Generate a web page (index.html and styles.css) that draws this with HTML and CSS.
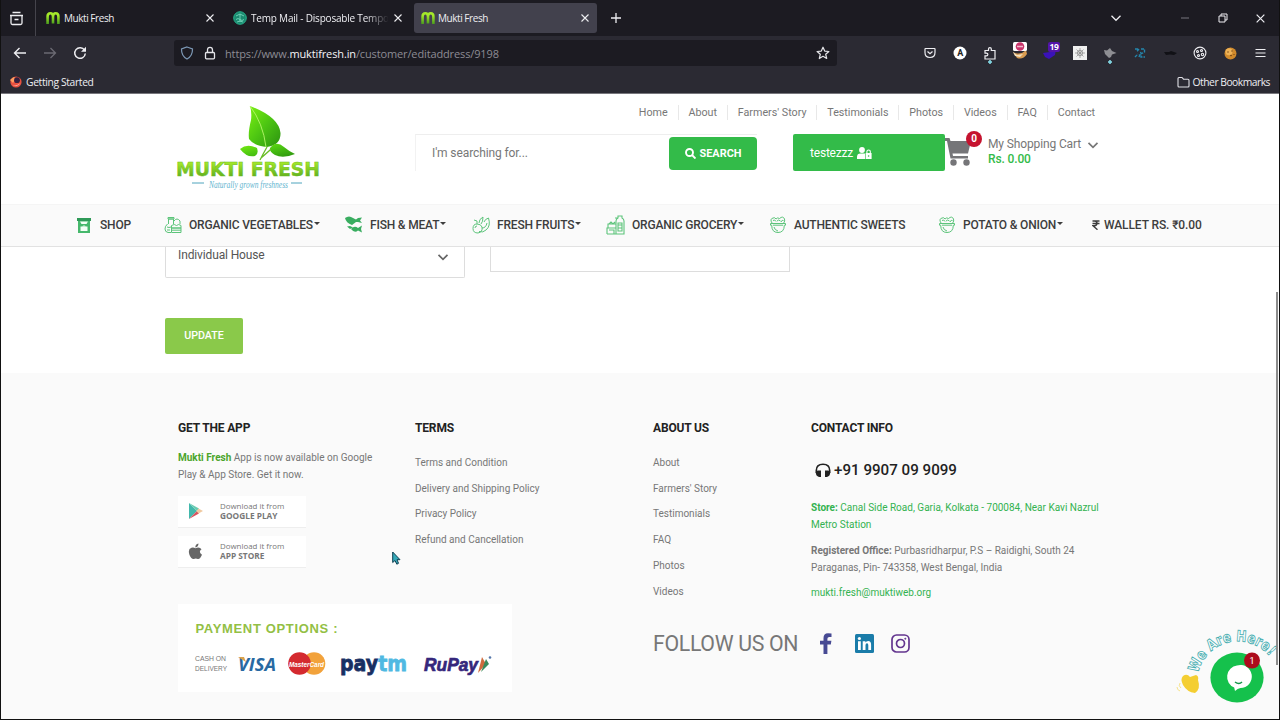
FILE: index.html
```html
<!DOCTYPE html>
<html lang="en">
<head>
<meta charset="utf-8">
<title>Mukti Fresh</title>
<link rel="stylesheet" href="styles.css">
</head>
<body>
<svg class="defs" width="0" height="0">
  <defs>
    <linearGradient id="lime" x1="0" y1="0" x2="0" y2="1"><stop offset="0.2" stop-color="#a4e82a"/><stop offset="1" stop-color="#4a9e1c"/></linearGradient>
    <linearGradient id="leaf" x1="0" y1="0" x2="1" y2="1"><stop offset="0" stop-color="#7bf012"/><stop offset=".5" stop-color="#4cc512"/><stop offset="1" stop-color="#2c9210"/></linearGradient>
    <symbol id="m" viewBox="0 0 14 14"><path d="M1.600 13V5.500Q1.600 2.200 4.400 2.200Q7 2.200 7 5.500V12.500M7 5.500Q7 2.200 9.700 2.200Q12.400 2.200 12.400 5.500V13" fill="none" stroke="url(#lime)" stroke-width="2.600"/></symbol>
    <symbol id="x" viewBox="0 0 10 10"><path d="M1.500 1.500l7 7M8.500 1.500l-7 7" stroke="currentColor" stroke-width="1.100"/></symbol>
    <symbol id="down" viewBox="0 0 12 12"><path d="M1.500 3.800L6 8.300l4.500-4.500" fill="none" stroke="currentColor" stroke-width="1.700"/></symbol>
    <symbol id="bowl" viewBox="0 0 18 18"><g fill="none" stroke="currentColor" stroke-width="1"><path d="M1.500 7.500h15v1.700h-1.200Q15.300 16.500 9 16.500T2.700 9.200H1.500zM4 9.200h10"/><path d="M3 7Q.5 3 4 2q2-1 3 1 1.500-2 3.500-.5Q14-.5 15.500 3q.8 2-.8 4M4 4.500q2-1.500 3 1M8 5q1.500-2 3.500 0M12 6q1-2.500 2.500-1.500"/><path d="M5 11q.5 3 4 4"/></g></symbol>
  </defs>
</svg>

<header class="chrome">
  <div class="tabs">
    <div class="tabs-view"><svg width="15" height="15" viewBox="0 0 15 15" fill="none" stroke="currentColor" stroke-width="1.300"><path d="M3.500 1.500h8M1 4.500h13M2 4.500v7.500q0 1.500 1.500 1.500h8q1.500 0 1.500-1.500V4.500M5.500 8.500h4"/></svg></div>
    <div class="tab"><svg class="fav"><use href="#m"/></svg><span class="tab-title">Mukti Fresh</span><svg class="close"><use href="#x"/></svg></div>
    <div class="tab"><svg class="fav" viewBox="0 0 14 14"><circle cx="7" cy="7" r="6.300" fill="#1b8a70" stroke="#27b18c"/><path d="M3 5l4-2 4 2M3 8.500q2-2 4 0t4 0M4 11l3-1 3 1M7 3v8" stroke="#7fe0c4" stroke-width=".8" fill="none"/></svg><span class="tab-title fade">Temp Mail - Disposable Tempo</span><svg class="close"><use href="#x"/></svg></div>
    <div class="tab active"><svg class="fav"><use href="#m"/></svg><span class="tab-title">Mukti Fresh</span><svg class="close"><use href="#x"/></svg></div>
    <svg class="plus" width="12" height="12" viewBox="0 0 12 12"><path d="M6 1v10M1 6h10" stroke="currentColor" stroke-width="1.300"/></svg>
    <div class="win">
      <svg width="12" height="12" viewBox="0 0 12 12"><path d="M1.500 3.800L6 8.300l4.500-4.500" fill="none" stroke="currentColor" stroke-width="1.300"/></svg>
      <svg width="10" height="10" viewBox="0 0 10 10"><path d="M1 5h8" stroke="#77767e" stroke-width="1"/></svg>
      <svg width="10" height="10" viewBox="0 0 10 10" fill="none" stroke="currentColor"><path d="M1 3h6v6H1zM3 3V1h6v6H7"/></svg>
      <svg width="11" height="11"><use href="#x"/></svg>
    </div>
  </div>
  <div class="toolbar">
    <div class="nav-ic"><svg width="14" height="14" viewBox="0 0 14 14"><path d="M13 7H2M6.500 2L1.500 7l5 5" fill="none" stroke="currentColor" stroke-width="1.400"/></svg></div>
    <div class="nav-ic dim"><svg width="14" height="14" viewBox="0 0 14 14"><path d="M1 7h11M7.500 2l5 5-5 5" fill="none" stroke="currentColor" stroke-width="1.300"/></svg></div>
    <div class="nav-ic"><svg width="14" height="14" viewBox="0 0 14 14"><path d="M11.500 4.200A5.300 5.300 0 1 0 12.300 7.500" fill="none" stroke="currentColor" stroke-width="1.500"/><path d="M13 .8v5H8z" fill="currentColor"/></svg></div>
    <div class="url">
      <svg width="14" height="14" viewBox="0 0 14 14"><path d="M7 1l5.500 2q.2 7-5.500 10Q1.300 10 1.500 3z" fill="none" stroke="#7c98b5" stroke-width="1.200"/></svg>
      <svg width="12" height="14" viewBox="0 0 12 14" fill="none" stroke="#e6e6ea" stroke-width="1.300"><rect x="1.500" y="6.500" width="9" height="6.300" rx="1"/><path d="M3.500 6.500V4Q3.500 1.300 6 1.300T8.500 4v2.500"/></svg>
      <span class="addr">https://www.<b>muktifresh.in</b>/customer/editaddress/9198</span>
      <svg class="star" width="14" height="14" viewBox="0 0 14 14"><path d="M7 1.200l1.700 3.900 4.200.4-3.200 2.800 1 4.200L7 10.300l-3.700 2.200 1-4.200L1.100 5.500l4.200-.4z" fill="none" stroke="#e6e6ea" stroke-width="1.200" stroke-linejoin="round"/></svg>
    </div>
    <div class="exts">
      <div><svg width="12" height="12" viewBox="0 0 12 12" fill="none" stroke="currentColor" stroke-width="1.200"><path d="M1.500 1.500h9q.5 0 .5.500v3.500Q11 10.500 6 10.500T1 5.500V2q0-.5.500-.5zM3.500 4.500L6 6.800 8.500 4.500"/></svg></div>
      <div><svg width="14" height="14" viewBox="0 0 14 14"><circle cx="7" cy="7" r="6.500" fill="#fff"/><text x="7" y="10.300" text-anchor="middle" class="ext-a">A</text></svg></div>
      <div class="dot"><svg width="14" height="14" viewBox="0 0 14 14" fill="none" stroke="currentColor" stroke-width="1.200"><path d="M2 13V9.800h1.500a1.300 1.300 0 0 0 0-2.700H2V4.500h3.500V3a1.400 1.400 0 0 1 2.800 0v1.500H12V13z"/></svg></div>
      <div class="up"><svg width="16" height="19" viewBox="0 0 16 19"><path d="M1 11q7 4 13-2l1 4q-4 6-10 4z" fill="#d99c52"/><rect x="1" y="1" width="14" height="9" rx="1.500" fill="#fff"/><circle cx="8" cy="5.500" r="4.300" fill="#c9346b"/><path d="M5 5.500h6" stroke="#f3b8cc" stroke-width="1.500"/><path d="M1 11l4 3 6-1-3 3-5-1z" fill="#f4e1c0"/></svg></div>
      <div class="up"><svg width="22" height="20" viewBox="0 0 22 20"><path d="M4 12l7-1 6-3-1 6-6 4-4-2z" fill="#3a12b8"/><rect x="9" y="1" width="12" height="10" rx="2" fill="#5314a9"/><text x="15" y="9" text-anchor="middle" class="ext-n">19</text></svg></div>
      <div><svg width="14" height="14" viewBox="0 0 14 14"><path d="M0 0h14v14H0z" fill="#f0f0f0"/><g stroke="#888" stroke-width=".7" fill="none"><path d="M7 2v10M2 7h10M3.500 3.500l7 7M10.500 3.500l-7 7"/><circle cx="7" cy="7" r="2.700"/></g></svg></div>
      <div class="dot"><svg width="14" height="12" viewBox="0 0 14 12"><path d="M1 3l3 .5L7 1l2 3 4.500 2L9 7.500 8 10l-2 1-4-4z" fill="#8e8e93"/></svg></div>
      <div><svg width="12" height="12" viewBox="0 0 12 12" fill="none" stroke="#2486ad" stroke-width="1.400"><path d="M1 2h4L2.500 5M7 2h3.500v3L7 7v3h4M1 10l3-3M5 10l2-5" stroke-dasharray="3 1"/></svg></div>
      <div><svg width="13" height="6" viewBox="0 0 13 6"><path d="M0 2h5l2-1 6 2-3 2-4-.5-4 .5z" fill="#111116"/></svg></div>
      <div><svg width="14" height="14" viewBox="0 0 14 14" fill="none" stroke="currentColor" stroke-width="1.100"><circle cx="7" cy="7" r="5.900"/><circle cx="4.500" cy="5.500" r="1"/><circle cx="8.500" cy="4.500" r="1"/><circle cx="9.500" cy="8.500" r="1.200"/><circle cx="5.500" cy="9.500" r="1"/></svg></div>
      <div><svg width="13" height="13" viewBox="0 0 13 13"><circle cx="6.500" cy="6.500" r="6" fill="#d08a2c"/><circle cx="5" cy="4.800" r="3.500" fill="#eeb256"/><g fill="#6a3b10"><circle cx="4" cy="5" r=".7"/><circle cx="8" cy="4" r=".7"/><circle cx="7" cy="8.500" r=".8"/><circle cx="10" cy="7.500" r=".6"/></g></svg></div>
      <div><svg width="11" height="10" viewBox="0 0 11 10"><path d="M.5 1.500h10M.5 5h10M.5 8.500h10" stroke="currentColor" stroke-width="1.100"/></svg></div>
    </div>
  </div>
  <div class="bookmarks">
    <svg width="12" height="12" viewBox="0 0 12 12"><circle cx="6" cy="6" r="5.600" fill="#e8503f"/><path d="M0 4Q3 1 4.500 1L5 4 3 7z" fill="#ff9d5f"/><circle cx="7" cy="4.200" r="2.900" fill="#33203f"/><path d="M1 7.500q4 4 9.500-.5-4 6-9.500.5z" fill="#ffb3a2"/></svg>
    <span>Getting Started</span>
    <svg class="folder" width="13" height="12" viewBox="0 0 13 12"><path d="M1 10V2.500q0-1 1-1h3l1.500 1.700H11q1 0 1 1V10q0 1-1 1H2q-1 0-1-1z" fill="none" stroke="#e0e0e6" stroke-width="1.100"/></svg>
    <span class="other">Other Bookmarks</span>
  </div>
</header>

<section class="top">
  <svg class="logo" width="148" height="90" viewBox="0 0 148 90">
    <path d="M74 1Q103 12 104.500 28 105 40 91 42 78 41 73 34 72 27 75 15 76 7 74 1z" fill="url(#leaf)"/>
    <path d="M74 1Q87 18 90 42" stroke="#b7f56d" stroke-width=".9" fill="none"/>
    <path d="M64 44q7-6 17-1 2 6-2 8-8 2-15-7zM94 43q6-8 14-1 6 5 11 7-12 5-20 1-6-3-5-7z" fill="url(#leaf)"/>
    <path d="M91 42q-4 7-7 13M95 44q-3 3-10 9" stroke="#69bd25" stroke-width="1.300" fill="none"/>
    <text x="0" y="71" textLength="144" lengthAdjust="spacingAndGlyphs" class="logo-name">MUKTI FRESH</text>
    <path d="M16 78h12M115 78h11" stroke="#4fa4bd" stroke-width="1"/>
    <text x="33" y="82.500" textLength="79" lengthAdjust="spacingAndGlyphs" class="logo-sub">Naturally grown freshness</text>
  </svg>
  <div class="top-right">
    <nav class="links"><a>Home</a><a>About</a><a>Farmers' Story</a><a>Testimonials</a><a>Photos</a><a>Videos</a><a>FAQ</a><a>Contact</a></nav>
    <div class="row">
      <div class="search"><span>I'm searching for...</span>
        <button class="search-btn"><svg width="11" height="11" viewBox="0 0 11 11" fill="none" stroke="#fff" stroke-width="1.900"><circle cx="4.500" cy="4.500" r="3.500"/><path d="M7 7l3.500 3.500"/></svg>SEARCH</button></div>
      <button class="account">testezzz<svg width="15" height="12" viewBox="0 0 15 12" fill="#fff"><circle cx="5" cy="3" r="2.900"/><path d="M0 12V10q0-3.400 3.500-3.400H8V12z"/><path d="M8.600 6h6v6h-6z"/><path d="M9.900 6.500V4.600q0-1.600 1.700-1.600t1.700 1.600v1.900" fill="none" stroke="#fff" stroke-width="1.100"/><circle cx="11.600" cy="9" r=".8" fill="#33bb49"/></svg></button>
      <div class="cart">
        <svg width="27" height="28" viewBox="0 0 27 28" fill="#757578"><path d="M0 0h4.500l1 3H26l-3 12.500H7.500l.5 2.500h15v2.500H5.500L2 3H0z"/><circle cx="8.500" cy="24.500" r="3.200"/><circle cx="21.500" cy="24.500" r="3.200"/></svg>
        <span class="badge">0</span>
      </div>
      <div class="cart-text"><div>My Shopping Cart <svg width="12" height="12"><use href="#down"/></svg></div><b>Rs. 0.00</b></div>
    </div>
  </div>
</section>

<nav class="menu">
  <a><svg width="16" height="18" viewBox="0 0 16 18"><path d="M1 2h14v3H1z" fill="#2f9a58"/><path d="M2 5h12v12H2z" fill="#46b86c"/><path d="M4 5.500h8L10.500 8h-5zM4.500 10.500h7V15h-7z" fill="#f4fff6"/><path d="M6 10.500q2-2 4 0z" fill="#f4fff6"/></svg><span>SHOP</span></a>
  <a><svg width="18" height="18" viewBox="0 0 18 18" fill="none" stroke="currentColor" stroke-width="1"><path d="M4.500 8V3h5v5M4 1.500h6V3H4zM10 5q3-4 6 0v3M7.500 12v-2.500q3-2 5 0 2-2 4.500 0V12zM7.500 12h9.500v4.500H7.500zM7.500 14.200H17M3.500 8Q1 10 1 13t3 3.500h3M3 11q2 1 4 0M3 14h3"/></svg><span class="caret">ORGANIC VEGETABLES</span></a>
  <a><svg width="18" height="18" viewBox="0 0 18 18" fill="#39ad60"><path d="M0 2q4-3 8 0l3 1.500L13 2l4-.5-2 3 2 2.500-4-1-2 0-4 3Q1 7 0 2zM6 13q3.500-4 7-1l4-2.500-1 3.500 1 3.500-4-2q-3.500 3-7-1.500z"/><path d="M2 10.500l3-.5 3 1.500-3 1.500z"/></svg><span class="caret">FISH &amp; MEAT</span></a>
  <a><svg width="18" height="18" viewBox="0 0 18 18" fill="none" stroke="currentColor" stroke-width="1"><path d="M7 7q0-4 4-6 0 5-2 7M12 6q1-3 4.500-4Q19 10 14 14q-3 3-7 1.500M5 8q-4 0-4 4.500T6 17q5-1 4-6-1-3-5-3zM5 8V5L2 4M10 12q4 0 5-5M3 12q0-2 2-2"/></svg><span class="caret">FRESH FRUITS</span></a>
  <a><svg width="19" height="20" viewBox="0 0 19 20" fill="none" stroke="currentColor" stroke-width="1.100"><path d="M1 19h17V6q0-2-2-3V1h-4v2q-2 1-2 3v13M1 19v-6h9M2 13V9h8M3 9l2-2 2 2 2-2M3 15h5v4M12 8h4v8h-4zM12 10h4M12 13h4M9 3h3"/></svg><span class="caret">ORGANIC GROCERY</span></a>
  <a><svg width="18" height="18"><use href="#bowl"/></svg><span>AUTHENTIC SWEETS</span></a>
  <a><svg width="18" height="18"><use href="#bowl"/></svg><span class="caret">POTATO &amp; ONION</span></a>
  <a class="wallet"><svg width="8" height="10" viewBox="0 0 8 10" fill="none" stroke="#3d3d3d" stroke-width="1.400"><path d="M.5 1h7M.5 3.500h7M1 1h1.500Q5 1 5 3.300T2.500 5.800H1L5.500 9.700"/></svg><span>WALLET RS. ₹0.00</span></a>
</nav>

<main class="form">
  <div class="fields">
    <div class="select"><span>Individual House</span><svg width="12" height="12"><use href="#down"/></svg></div>
    <div class="input"></div>
  </div>
  <button class="update">UPDATE</button>
</main>

<footer class="footer">
  <div class="left">
    <div class="app">
      <h4>GET THE APP</h4>
      <p><b>Mukti Fresh</b> App is now available on Google<br>Play &amp; App Store. Get it now.</p>
      <div class="store"><svg width="15" height="16" viewBox="0 0 15 16"><path d="M1 0v16l8-8z" fill="#42b8ac"/><path d="M1 0l10 5.500L9 8z" fill="#6acbb0"/><path d="M1 16l10-5.500L9 8z" fill="#d8545e"/><path d="M10.500 5.500L15 8l-4.500 2.500L8.500 8z" fill="#f0c9a0"/></svg><div>Download it from<b>GOOGLE PLAY</b></div></div>
      <div class="store"><svg width="15" height="17" viewBox="0 0 15 17" fill="#666"><path d="M10.500.5Q10.500 4 7.300 4.400 7.300 1.300 10.500.5zM7.500 5.200Q11.500 3.500 13.500 6.200q-3.500 2.500.5 5.600Q12 16.500 9.800 16q-2-1-4 0Q3.500 16.500 1.500 12q-2-6 2-7.200 2-.5 4 .4z"/></svg><div>Download it from<b>APP STORE</b></div></div>
    </div>
    <div class="terms">
      <h4>TERMS</h4>
      <ul><li>Terms and Condition</li><li>Delivery and Shipping Policy</li><li>Privacy Policy</li><li>Refund and Cancellation</li></ul>
    </div>
    <svg class="pay" width="334" height="88" viewBox="0 0 334 88">
      <path d="M0 0h334v88H0z" fill="#fff"/>
      <text x="17.500" y="28.700" textLength="142" class="pay-title">PAYMENT OPTIONS :</text>
      <text x="17" y="57" textLength="31" lengthAdjust="spacingAndGlyphs" class="cod">CASH ON</text>
      <text x="17" y="66.500" textLength="32" lengthAdjust="spacingAndGlyphs" class="cod">DELIVERY</text>
      <text x="60" y="66.500" textLength="38" lengthAdjust="spacingAndGlyphs" class="visa">VISA</text>
      <path d="M60 53h6l2 5z" fill="#dba24b"/>
      <circle cx="136" cy="59.500" r="11.300" fill="#f2a23b"/><circle cx="121.500" cy="59.500" r="11.300" fill="#d42a2f"/>
      <text x="111" y="62.500" textLength="35" lengthAdjust="spacingAndGlyphs" class="mc">MasterCard</text>
      <text x="162" y="66.500" textLength="67" lengthAdjust="spacingAndGlyphs" class="paytm">pay<tspan class="lt">tm</tspan></text>
      <text x="246" y="66.500" textLength="54" lengthAdjust="spacingAndGlyphs" class="rupay">RuPay</text>
      <path d="M304 53l4 7-8 9z" fill="#cf6b3d"/><path d="M308 55l3 5-8 8z" fill="#3a8a5b"/><circle cx="312" cy="53.500" r="1.300" fill="#5577aa"/>
    </svg>
  </div>
  <div class="right">
    <div class="about">
      <h4>ABOUT US</h4>
      <ul><li>About</li><li>Farmers' Story</li><li>Testimonials</li><li>FAQ</li><li>Photos</li><li>Videos</li></ul>
    </div>
    <div class="contact">
      <h4>CONTACT INFO</h4>
      <div class="phone"><svg width="16" height="14" viewBox="0 0 16 14"><path d="M1.300 10V7.500Q1.300 1.200 8 1.200t6.700 6.300V10" fill="none" stroke="#222" stroke-width="1.600"/><path d="M2.500 7.500H6V14H4Q.8 13 .8 9.500zM13.500 7.500H10V14h2q3.200-1 3.200-4.500z" fill="#222"/></svg>+91 9907 09 9099</div>
      <p class="green store-addr"><b>Store:</b> Canal Side Road, Garia, Kolkata - 700084, Near Kavi Nazrul<br>Metro Station</p>
      <p class="office"><b>Registered Office:</b> Purbasridharpur, P.S – Raidighi, South 24<br>Paraganas, Pin- 743358, West Bengal, India</p>
      <p class="green">mukti.fresh@muktiweb.org</p>
    </div>
    <div class="follow"><span>FOLLOW US ON</span>
      <svg width="12" height="21" viewBox="0 0 12 21"><path d="M3.500 21v-9.500H0V7.700h3.500V5Q3.500.3 8 .3q2 0 3.500.3v3.300H9.300q-1.900 0-1.900 1.800v2h4l-.6 3.800H7.400V21z" fill="#474a93"/></svg>
      <svg width="19" height="19" viewBox="0 0 19 19"><rect width="19" height="19" rx="1.500" fill="#1a7ca9"/><path d="M3 7.300h2.800v8.700H3zM7.700 7.300h2.700v1.200Q11.300 7 13.200 7q2.900 0 2.900 3.700V16h-2.800v-4.700q0-2-1.300-2-1.500 0-1.500 2V16H7.700z" fill="#fff"/><circle cx="4.400" cy="4.500" r="1.600" fill="#fff"/></svg>
      <svg width="19" height="19" viewBox="0 0 19 19" fill="none" stroke="#63358f" stroke-width="1.700"><rect x="1" y="1" width="17" height="17" rx="4.500"/><circle cx="9.500" cy="9.500" r="4"/><circle cx="14.300" cy="4.700" r=".6" fill="#63358f" stroke-width=".8"/></svg>
    </div>
  </div>
</footer>

<svg class="chat" width="110" height="100" viewBox="0 0 110 100">
  <path id="arc" d="M28 53A41 41 0 0 1 101 38" fill="none"/>
  <text class="chat-text"><textPath href="#arc" textLength="91" lengthAdjust="spacingAndGlyphs">We Are Here!</textPath></text>
  <path d="M13 56q4-3 7 1l6-2q3 1 2 5 3 9-3 13-8-1-12-8-3-6 0-9z" fill="#f4ce32"/>
  <path d="M10 63q-2 3 1 5M7 67q0 3 3 4" stroke="#f7e48b" fill="none"/>
  <ellipse cx="67" cy="57.500" rx="26.600" ry="25" fill="#15c14c"/>
  <path d="M67 45.500a11.500 11.500 0 1 1 3.500 22.500q-3 .5-5.500 3l-.8-3.500A11.500 11.500 0 0 1 67 45.500z" fill="#fff"/>
  <path d="M65 62q4 3 7 0" stroke="#15964a" stroke-width="1.500" fill="none"/>
  <circle cx="82" cy="40.500" r="8" fill="#ac0b1c"/><text x="82" y="44" text-anchor="middle" class="chat-n">1</text>
</svg>
<svg class="cursor" width="9" height="14" viewBox="0 0 9 14"><path d="M.7 1v10.500l2.300-2 1.800 3.700 1.700-.9L5 8.700h3z" fill="#35a9b8" stroke="#0e3f52" stroke-width="1"/></svg>
<div class="scroll"></div>
<div class="frame"></div>
</body>
</html>
```
FILE: styles.css
```css
* { box-sizing: border-box; }
body { margin: 0; width: 1280px; height: 720px; overflow: hidden; position: relative; background: #fff; font-family: Roboto, sans-serif; color: #777; }
.defs { position: absolute; }
svg { display: block; flex: none; }
button { border: 0; padding: 0; font-family: inherit; }
h4, p, ul { margin: 0; padding: 0; list-style: none; }

.chrome { height: 94px; background: #2b2a33; border-bottom: 1px solid #77767c; color: #eeeef2; font-family: "Open Sans", "Noto Sans", sans-serif; font-size: 10.3px; letter-spacing: -.35px; }
.tabs { height: 36px; background: #1c1b22; display: flex; align-items: center; }
.tabs-view { width: 36px; height: 36px; border-right: 1px solid #45444c; display: flex; align-items: center; padding-left: 9px; }
.tab { width: 188px; height: 30px; display: flex; align-items: center; padding: 0 9px 0 10px; font-size: 10px; letter-spacing: -.5px; }
.tab:nth-child(2), .tab.active { letter-spacing: -.45px; }
.tab + .tab { padding-left: 9px; }
.tab.active { width: 183px; background: #42414d; border-radius: 3px; margin-left: 2px; padding: 0 7px; }
.tab-title { margin-left: 4px; width: 141px; white-space: nowrap; overflow: hidden; }
.tab.active .tab-title { margin-left: 3px; }
.tab .fade { -webkit-mask-image: linear-gradient(to right, #000 82%, transparent 99%); mask-image: linear-gradient(to right, #000 82%, transparent 99%); width: 139px; letter-spacing: -.2px; }
.fav { width: 14px; height: 14px; }
.close { width: 10px; height: 10px; margin-left: auto; }
.plus { margin-left: 13px; }
.win { margin-left: auto; display: flex; align-items: center; padding-right: 14px; }
.win svg:nth-child(2) { margin-left: 58px; }
.win svg:nth-child(3) { margin-left: 28px; }
.win svg:nth-child(4) { margin-left: 27px; }
.toolbar { height: 34px; display: flex; align-items: center; padding-left: 5px; }
.nav-ic { width: 30px; display: flex; justify-content: center; }
.dim { color: #6b6a73; }
.url { margin-left: 79px; width: 663px; height: 26px; background: #1c1b22; border-radius: 3px; display: flex; align-items: center; padding: 0 7px 0 6px; }
.url svg:nth-child(2) { margin-left: 10px; }
.addr { margin-left: 9px; color: #8d8c94; font-size: 11px; letter-spacing: -.13px; }
.addr b { font-weight: 400; color: #f5f5f8; }
.star { margin-left: auto; }
.exts { margin-left: 78px; display: flex; }
.exts div { width: 30px; height: 26px; display: flex; align-items: center; justify-content: center; }
.exts .up { align-items: flex-start; padding-top: 1px; }
.dot { background: radial-gradient(circle at 15px 22px, #7fd0dc 1.5px, transparent 2px); }
.ext-a { font: bold 9px Roboto, sans-serif; fill: #222; }
.ext-n { font: bold 8.5px "Open Sans", sans-serif; fill: #fff; }
.bookmarks { height: 23px; display: flex; align-items: center; padding: 0 10px; }
.bookmarks span { margin-left: 4px; }
.folder { margin-left: auto; }
.bookmarks .other { margin-left: 3px; letter-spacing: -.5px; }

.top { height: 110px; display: flex; padding-left: 176px; }
.logo { margin-top: 11px; }
.logo-name { font: bold 19.5px "DejaVu Sans", sans-serif; fill: url(#lime); stroke: #6fbd24; stroke-width: .5; }
.logo-sub { font: italic 9.5px "Liberation Serif", serif; fill: #64b5cf; }
.top-right { margin-left: 91px; flex: 1; padding-top: 9px; }
.links { display: flex; margin-left: 214px; font-size: 10.72px; line-height: 15px; margin-top: 2px; }
.links a { padding: 0 10px 0 9.8px; border-right: 1px solid #e8e8e8; }
.links a:last-child { border: 0; }
.row { display: flex; margin-top: 14px; height: 37px; }
.search { width: 342px; border-top: 1px solid #eee; border-left: 1px solid #f2f2f2; display: flex; align-items: center; padding-left: 16px; font-size: 12px; letter-spacing: -.1px; }
.search-btn { margin-left: auto; width: 88px; height: 33px; background: #33bb49; border-radius: 4px; color: #fff; font-weight: 700; font-size: 10.9px; display: flex; align-items: center; justify-content: center; gap: 4px; }
.account { margin-left: 36px; width: 152px; background: #33bb49; border-radius: 2px; color: #fff; font-size: 12px; letter-spacing: -.2px; display: flex; align-items: center; padding-left: 17px; gap: 4px; }
.cart { position: relative; padding-top: 4px; }
.badge { position: absolute; left: 21px; top: -3px; width: 16px; height: 16px; border-radius: 8px; background: #c5132f; color: #fff; font-size: 10px; font-weight: 700; text-align: center; line-height: 16px; }
.cart-text { margin-left: 16px; padding-top: 3px; font-size: 12px; line-height: 15px; letter-spacing: -.13px; }
.cart-text div { display: flex; align-items: center; gap: 6px; }
.cart-text b { display: block; color: #33bb49; font-weight: 500; }

.menu { height: 43px; background: #fafafa; border-top: 1px solid #f5f5f5; border-bottom: 1px solid #e2e2e2; display: grid; grid-template-columns: 88px 181px 127px 134px 163px 169px 154px 120px; padding: 0 0 2px 76px; font-size: 12px; font-weight: 500; letter-spacing: -.18px; color: #3d3d3d; }
.menu a { display: flex; align-items: center; white-space: nowrap; }
.menu svg { color: #5cc47a; margin-right: 7px; }
.menu a:first-child svg { margin-right: 8px; }
.menu .wallet { letter-spacing: -.1px; }
.menu .wallet svg { margin-right: 4px; }
.caret::after { content: ""; display: inline-block; border: 3px solid transparent; border-top-color: #3d3d3d; border-bottom: 0; margin-left: 1px; vertical-align: 4px; }

.form { height: 126px; padding-left: 165px; background: #fff; }
.fields { display: flex; gap: 25px; }
.select { width: 300px; height: 31px; border: 1px solid #ddd; border-top: 0; border-radius: 0 0 2px 2px; display: flex; justify-content: space-between; align-items: flex-start; padding: 1px 15px 0 12px; font-size: 12px; letter-spacing: -.13px; color: #555; }
.select svg { margin-top: 3px; color: #666; }
.input { width: 300px; height: 25px; border: 1px solid #ddd; border-top: 0; }
.update { display: block; margin-top: 40px; width: 78px; height: 36px; padding-bottom: 1px; background: #8ac94a; border-radius: 2px; color: #fff; font-weight: 500; font-size: 10.7px; }

.footer { height: 347px; background: #fafafa; padding: 47px 0 0 178px; display: flex; font-size: 10px; }
h4 { font-size: 12px; font-weight: 700; line-height: 16px; color: #222; letter-spacing: -.16px; }
.left { width: 475px; display: grid; grid-template-columns: 237px 238px; grid-template-rows: 184px 88px; }
.pay { grid-column: 1 / 3; }
.app p { margin-top: 13px; line-height: 17.3px; }
.app p b { color: #4ba52c; }
.store { width: 128px; height: 32px; background: #fff; border-bottom: 1px solid #eee; display: flex; align-items: center; padding-left: 10px; margin-top: 8px; gap: 17px; font: 7.9px/10px "Open Sans", sans-serif; color: #777; }
.app p + .store { margin-top: 12px; }
.store b { display: block; font-weight: 700; font-size: 8.3px; }
ul { padding-top: 13.7px; }
li { height: 25.9px; line-height: 26px; }
.right { display: grid; grid-template-columns: 158px 310px; grid-template-rows: 207px 40px; }
.phone { display: flex; align-items: center; gap: 3px; color: #222; font-size: 15.15px; font-weight: 500; margin: 22px 0 0 4px; line-height: 24px; }
.contact p { line-height: 17.2px; margin-top: 8.3px; }
.contact .store-addr { margin-top: 17px; }
.contact .green { color: #33b250; }
.follow { grid-column: 1 / 3; display: flex; align-items: center; height: 32px; font-size: 21.3px; letter-spacing: -.33px; }
.follow svg:nth-child(2) { margin-left: 22px; }
.follow svg:nth-child(3) { margin-left: 23px; }
.follow svg:nth-child(4) { margin-left: 17px; }
.pay-title { font: bold 13px "Liberation Sans", sans-serif; fill: #93bf45; }
.cod { font: 7.5px "Liberation Sans", sans-serif; fill: #777; }
.visa { font: italic bold 18px "Open Sans", sans-serif; fill: #2869a2; }
.mc { font: italic bold 7px "Liberation Sans", sans-serif; fill: #fff; }
.paytm { font: bold 22px "DejaVu Sans", sans-serif; fill: #182f63; stroke: #182f63; stroke-width: .8; }
.lt { fill: #4fb9e2; stroke: #4fb9e2; }
.rupay { font: italic bold 18.5px "Liberation Sans", sans-serif; fill: #35277b; stroke: #35277b; stroke-width: .7; }

.chat { position: absolute; left: 1170px; top: 620px; }
.chat-text { font: bold 15px "DejaVu Sans", sans-serif; fill: #fff; stroke: #48aeb1; stroke-width: .9; }
.chat-n { font: 9px Roboto, sans-serif; fill: #fff; }
.cursor { position: absolute; left: 392px; top: 551px; }
.scroll { position: absolute; right: 2px; top: 292px; width: 2px; height: 373px; background: #8c8c8c; }
.frame { position: absolute; inset: 0; border: solid #111; border-width: 0 1px 1px 1px; pointer-events: none; }
```
